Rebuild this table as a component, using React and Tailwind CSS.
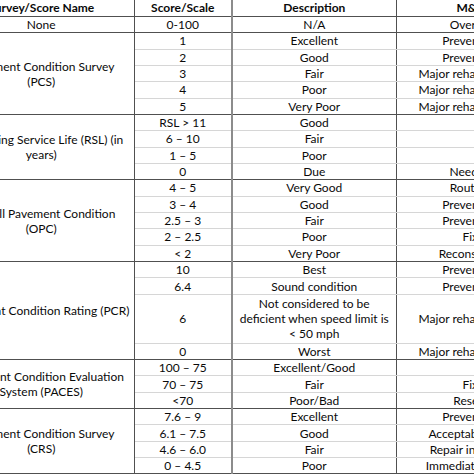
const groups = [
  { name: 'None', rows: [['0-100', 'N/A', 'Overlay']] },
  {
    name: 'Pavement Condition Survey (PCS)',
    rows: [
      ['1', 'Excellent', 'Preventive'],
      ['2', 'Good', 'Preventive'],
      ['3', 'Fair', 'Major rehabilitation'],
      ['4', 'Poor', 'Major rehabilitation'],
      ['5', 'Very Poor', 'Major rehabilitation'],
    ],
  },
  {
    name: 'Remaining Service Life (RSL) (in years)',
    rows: [
      ['RSL > 11', 'Good', ''],
      ['6 – 10', 'Fair', ''],
      ['1 – 5', 'Poor', ''],
      ['0', 'Due', 'Needed'],
    ],
  },
  {
    name: 'Overall Pavement Condition (OPC)',
    rows: [
      ['4 – 5', 'Very Good', 'Routine'],
      ['3 – 4', 'Good', 'Preventive'],
      ['2.5 – 3', 'Fair', 'Preventive'],
      ['2 – 2.5', 'Poor', 'Fix'],
      ['< 2', 'Very Poor', 'Reconstruct'],
    ],
  },
  {
    name: 'Pavement Condition Rating (PCR)',
    rows: [
      ['10', 'Best', 'Preventive'],
      ['6.4', 'Sound condition', 'Preventive'],
      ['6', ['Not considered to be', 'deficient when speed limit is', '< 50 mph'], 'Major rehabilitation', true],
      ['0', 'Worst', 'Major rehabilitation'],
    ],
  },
  {
    name: 'Pavement Condition Evaluation System (PACES)',
    rows: [
      ['100 – 75', 'Excellent/Good', ''],
      ['70 – 75', 'Fair', 'Fix'],
      ['<70', 'Poor/Bad', 'Reseal'],
    ],
  },
  {
    name: 'Pavement Condition Survey (CRS)',
    rows: [
      ['7.6 – 9', 'Excellent', 'Preventive'],
      ['6.1 – 7.5', 'Good', 'Acceptable as is'],
      ['4.6 – 6.0', 'Fair', 'Repair in future'],
      ['0 – 4.5', 'Poor', 'Immediate repair'],
    ],
  },
]

export default function App() {
  return (
    <div className="w-[474px] h-[474px] overflow-hidden bg-white">
      <table
        className="table-fixed border-collapse w-[595px] ml-[-51px] text-[12px] leading-[15px] text-[#0a0a0a] text-center"
        style={{ fontFamily: 'Lato, "Open Sans", sans-serif' }}
      >
        <colgroup>
          <col className="w-[185px]" />
          <col className="w-[98px]" />
          <col className="w-[164px]" />
          <col className="w-[148px]" />
        </colgroup>
        <thead>
          <tr className="h-[16.35px] font-bold">
            <th className="p-0 border-b border-r border-[#505050]">Survey/Score Name</th>
            <th className="p-0 border-b border-b-[#505050] border-r-2 border-r-[#8c8c8c]">Score/Scale</th>
            <th className="p-0 border-b border-r border-[#505050]">Description</th>
            <th className="p-0 border-b border-[#505050]">M&amp;R</th>
          </tr>
        </thead>
        <tbody>
          {groups.map((g) =>
            g.rows.map((r, i) => {
              const last = i === g.rows.length - 1
              const line = last ? 'border-b-[#505050]' : 'border-b-[#d6d6d6]'
              return (
                <tr key={g.name + i} className={r[3] ? 'h-[49px]' : 'h-[16.35px]'}>
                  {i === 0 && (
                    <td rowSpan={g.rows.length} className="px-1 py-0 border-b border-r border-[#505050] align-middle">
                      {g.name}
                    </td>
                  )}
                  <td className={`p-0 border-b ${line} border-r-2 border-r-[#8c8c8c]`}>{r[0]}</td>
                  <td className={`p-0 border-b ${line} border-r border-r-[#505050] whitespace-nowrap`}>
                    {Array.isArray(r[1]) ? r[1].map((t) => <div key={t}>{t}</div>) : r[1]}
                  </td>
                  <td className={`p-0 border-b ${line} whitespace-nowrap`}>{r[2]}</td>
                </tr>
              )
            })
          )}
        </tbody>
      </table>
    </div>
  )
}
